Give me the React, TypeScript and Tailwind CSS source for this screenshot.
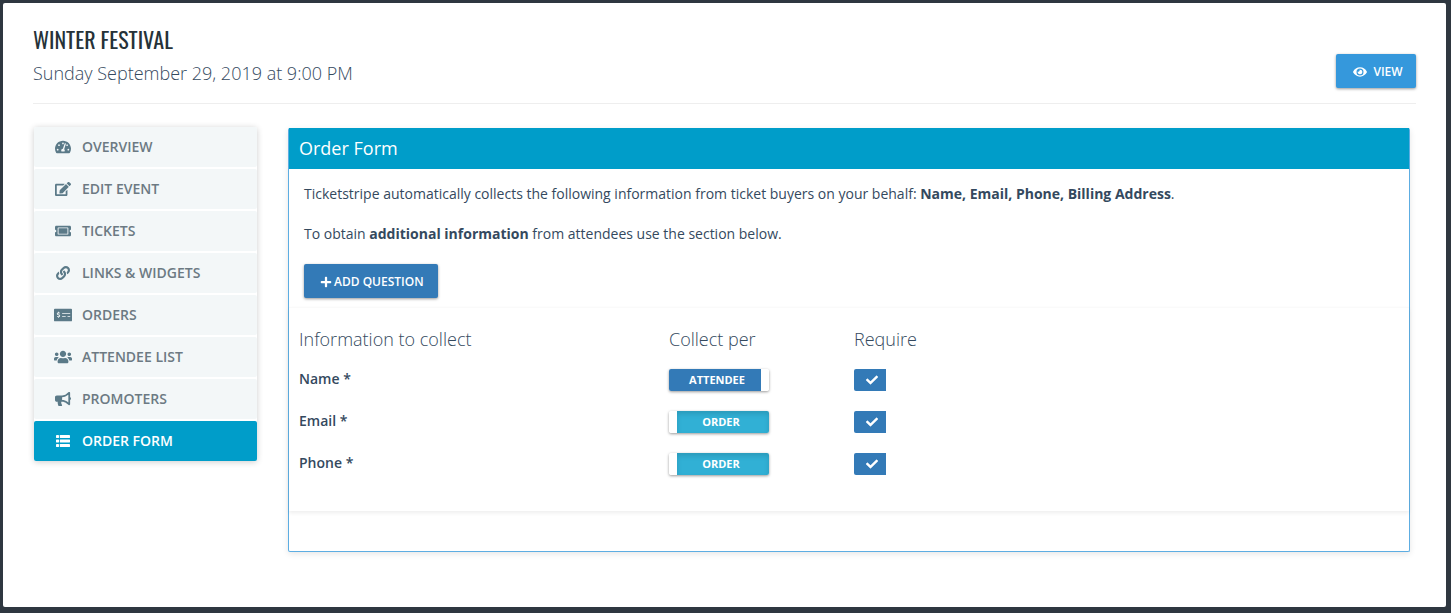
import { useState } from 'react';
import type { IconType } from 'react-icons';
import {
  FaBullhorn,
  FaCheck,
  FaEdit,
  FaEye,
  FaLink,
  FaMoneyCheckAlt,
  FaPlus,
  FaTachometerAlt,
  FaTicketAlt,
  FaUsers,
} from 'react-icons/fa';

interface NavItem {
  label: string;
  icon: IconType;
  size: string;
  active?: boolean;
}

interface Question {
  id: string;
  label: string;
  perAttendee: boolean;
  required: boolean;
}

function ListIcon({ className }: { className?: string }) {
  return (
    <svg viewBox="0 0 14 14" fill="currentColor" className={className}>
      <rect x="0" y="1" width="3" height="3" rx="0.4" />
      <rect x="0" y="5.5" width="3" height="3" rx="0.4" />
      <rect x="0" y="10" width="3" height="3" rx="0.4" />
      <rect x="3.8" y="1" width="10.2" height="3" rx="0.4" />
      <rect x="3.8" y="5.5" width="10.2" height="3" rx="0.4" />
      <rect x="3.8" y="10" width="10.2" height="3" rx="0.4" />
    </svg>
  );
}

const navItems: NavItem[] = [
  { label: 'Overview', icon: FaTachometerAlt, size: 'size-4' },
  { label: 'Edit Event', icon: FaEdit, size: 'size-4' },
  { label: 'Tickets', icon: FaTicketAlt, size: 'size-4' },
  { label: 'Links & Widgets', icon: FaLink, size: 'size-3.5' },
  { label: 'Orders', icon: FaMoneyCheckAlt, size: 'size-[18px]' },
  { label: 'Attendee List', icon: FaUsers, size: 'size-[18px]' },
  { label: 'Promoters', icon: FaBullhorn, size: 'size-4' },
  { label: 'Order Form', icon: ListIcon, size: 'size-3.5', active: true },
];

const initialQuestions: Question[] = [
  { id: 'name', label: 'Name', perAttendee: true, required: true },
  { id: 'email', label: 'Email', perAttendee: false, required: true },
  { id: 'phone', label: 'Phone', perAttendee: false, required: true },
];

function SideNav() {
  return (
    <nav className="flex w-[223px] shrink-0 flex-col gap-0.5 self-start rounded-xs shadow-[0_1px_6px_rgba(0,0,0,0.2)]">
      {navItems.map(({ label, icon: Icon, size, active }) => (
        <a
          key={label}
          href="#"
          className={`flex h-10 items-center rounded-xs pl-5 text-sm font-semibold uppercase ${
            active ? 'bg-[#009dc9] text-white' : 'bg-[#f3f7f8] text-[#6c7a83]'
          }`}
        >
          <span className={`flex w-[18px] justify-center ${active ? 'text-white' : 'text-[#5b7a88]'}`}>
            <Icon className={size} />
          </span>
          <span className="ml-2.5">{label}</span>
        </a>
      ))}
    </nav>
  );
}

interface SwitchProps {
  label: string;
  checked: boolean;
  onChange: () => void;
}

function CollectSwitch({ label, checked, onChange }: SwitchProps) {
  return (
    <label className="flex h-[22px] w-[100px] cursor-pointer overflow-hidden rounded-xs text-[11px] font-bold text-white shadow-[0_1px_3px_rgba(0,0,0,0.4)]">
      <input type="checkbox" className="sr-only" aria-label={label} checked={checked} onChange={onChange} />
      {!checked && <span className="w-2 rounded-xs bg-white" />}
      <span
        className={`flex flex-1 items-center justify-center ${
          checked ? 'bg-[#337ab7] pl-1' : 'bg-[#31b0d5] pr-1 shadow-[inset_0_3px_5px_rgba(0,0,0,0.125)]'
        }`}
      >
        {checked ? 'ATTENDEE' : 'ORDER'}
      </span>
      {checked && <span className="w-2 rounded-xs bg-white" />}
    </label>
  );
}

function RequireSwitch({ label, checked, onChange }: SwitchProps) {
  return (
    <label className="flex h-[22px] w-10 cursor-pointer overflow-hidden rounded-xs text-white">
      <input type="checkbox" className="sr-only" aria-label={label} checked={checked} onChange={onChange} />
      <span
        className={`flex w-8 items-center justify-center pl-1 ${checked ? 'bg-[#337ab7]' : 'bg-gray-300'}`}
      >
        {checked && <FaCheck className="size-3" />}
      </span>
      <span className="w-2 rounded-xs bg-white" />
    </label>
  );
}

export default function App() {
  const [questions, setQuestions] = useState<Question[]>(initialQuestions);

  const toggle = (id: string, key: 'perAttendee' | 'required') => {
    setQuestions(questions.map(q => (q.id === id ? { ...q, [key]: !q[key] } : q)));
  };

  return (
    <div className="min-h-screen bg-[#2f3740] pt-[3px] pr-[5px] pb-1.5 pl-[3px] font-['Open_Sans',sans-serif] text-sm text-[#34495e]">
      <div className="rounded-xs bg-white px-[30px] pt-[22px] pb-[55px]">
        {/* Event header */}
        <header className="flex items-end justify-between border-b border-[#eeeeee] pb-[15px]">
          <div>
            <h1 className="font-['Oswald','Liberation_Sans_Narrow',sans-serif] text-[22px] leading-7 text-[#263238] uppercase">
              Winter Festival
            </h1>
            <p className="mt-1.5 mb-px text-lg leading-7 font-light">Sunday September 29, 2019 at 9:00 PM</p>
          </div>
          <button
            type="button"
            className="flex h-[34px] w-20 items-center justify-center gap-1.5 rounded-xs bg-[#3598dc] pt-px pl-1 text-xs font-semibold text-white shadow-[0_1px_3px_rgba(0,0,0,0.4)]"
          >
            <FaEye className="size-3.5" />
            VIEW
          </button>
        </header>

        <div className="mt-[23px] flex gap-[31px] pr-1.5 pl-px">
          <SideNav />

          {/* Order form panel */}
          <main className="mt-px flex-1 rounded-xs border border-t-0 border-[#5dade2] pb-10 shadow-[0_2px_6px_rgba(0,0,0,0.1)]">
            <h2 className="h-[41px] bg-[#009dc9] px-2.5 text-lg leading-[41px] text-white">Order Form</h2>

            <section className="px-[15px] pt-[15px] pb-[9px]">
              <p className="leading-5">
                Ticketstripe automatically collects the following information from ticket buyers on your behalf:{' '}
                <strong>Name, Email, Phone, Billing Address</strong>.
              </p>
              <p className="mt-5 leading-5">
                To obtain <strong>additional information</strong> from attendees use the section below.
              </p>
              <button
                type="button"
                className="mt-5 flex h-[34px] items-center gap-0.5 rounded-xs bg-[#337ab7] pt-px pr-3.5 pl-4 text-xs font-semibold text-white shadow-[0_1px_3px_rgba(0,0,0,0.4)]"
              >
                <FaPlus className="size-3" />
                ADD QUESTION
              </button>
            </section>

            <section className="border-t border-[#fafafa] pt-[19px] pb-4 pl-2.5 shadow-[0_2px_4px_rgba(0,0,0,0.07)]">
              <table className="w-full table-fixed text-left">
                <thead>
                  <tr className="h-[42px] align-top text-lg leading-6">
                    <th className="w-1/3 font-light">Information to collect</th>
                    <th className="w-1/6 font-light">Collect per</th>
                    <th className="font-light">Require</th>
                  </tr>
                </thead>
                <tbody>
                  {questions.map(q => (
                    <tr key={q.id} className="h-[42px] align-top">
                      <th className="leading-5 font-semibold">{q.label} *</th>
                      <td>
                        <CollectSwitch
                          label={`Collect ${q.label} per attendee`}
                          checked={q.perAttendee}
                          onChange={() => toggle(q.id, 'perAttendee')}
                        />
                      </td>
                      <td>
                        <RequireSwitch
                          label={`Require ${q.label}`}
                          checked={q.required}
                          onChange={() => toggle(q.id, 'required')}
                        />
                      </td>
                    </tr>
                  ))}
                </tbody>
              </table>
            </section>
          </main>
        </div>
      </div>
    </div>
  );
}
